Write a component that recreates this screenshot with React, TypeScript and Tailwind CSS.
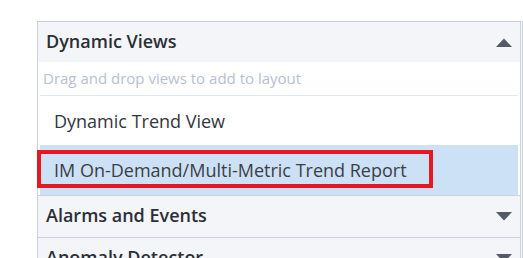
import React from "react"

function Caret({ up }: { up?: boolean }) {
  return (
    <svg width="16" height="9" viewBox="0 0 16 9" className="shrink-0">
      {up ? <polygon points="0,9 8,0.5 16,9" fill="#555b66" /> : <polygon points="0,0 16,0 8,8.5" fill="#555b66" />}
    </svg>
  )
}

export default function App() {
  return (
    <div className="w-[523px] h-[258px] overflow-hidden bg-white font-['Open_Sans',sans-serif]">
      <div className="flex pt-[21px] pl-[37px]">
        <div className="w-[484px] border border-b-0 border-[#c9d0dc]">
          {/* Dynamic Views header */}
          <div className="h-[40px] bg-[#f4f5f9] flex items-center justify-between pl-[8px] pr-[8px]">
            <span className="text-[18px] leading-[24px] font-semibold text-[#2b2f36] -mt-[3px]">Dynamic Views</span>
            <Caret up />
          </div>

          <div className="px-[2px]">
            <div className="h-[34px] border-b border-[#e3e7ee] flex items-center pl-[3px]">
              <span className="text-[15px] text-[#b6c0d0]">Drag and drop views to add to layout</span>
            </div>
            <div className="h-[49px] flex items-center pl-[14px]">
              <span className="text-[18px] leading-[24px] text-[#33373d]">Dynamic Trend View</span>
            </div>
            <div className="relative h-[50px] bg-[#cce1f5] flex items-center pl-[14px]">
              <span className="text-[18px] leading-[24px] text-[#3a3f47]">IM On-Demand/Multi-Metric Trend Report</span>
              <div className="absolute left-[-3px] top-[5px] w-[396px] h-[38px] border-4 border-[#e8161f]" />
            </div>
          </div>

          {/* Alarms and Events */}
          <div className="h-[42px] bg-[#f4f5f9] border-t border-[#ccd2dd] flex items-center justify-between pl-[8px] pr-[8px]">
            <span className="text-[18px] leading-[24px] font-semibold text-[#2b2f36] -mt-[3px]">Alarms and Events</span>
            <Caret />
          </div>

          {/* Anomaly Detector */}
          <div className="h-[42px] bg-[#f4f5f9] border-t border-[#ccd2dd] flex items-center justify-between pl-[8px] pr-[8px]">
            <span className="text-[18px] leading-[24px] font-semibold text-[#2b2f36] -mt-[3px]">Anomaly Detector</span>
            <Caret />
          </div>
        </div>
        <div className="ml-px w-px h-[260px] bg-[#c9d0dc]" />
      </div>
    </div>
  )
}
